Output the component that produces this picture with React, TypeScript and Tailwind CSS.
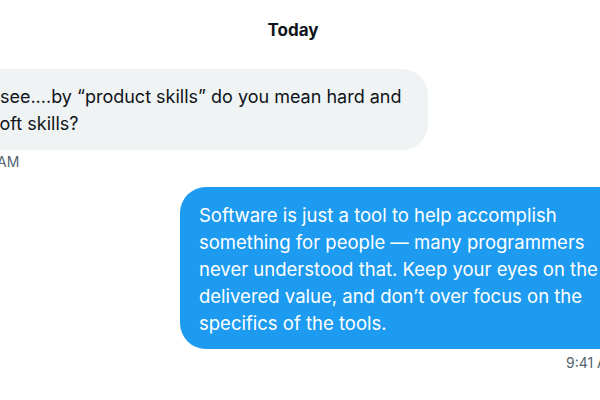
import React from "react";

const GREY_LINES = ["I see....by “product skills” do you mean hard and", "soft skills?"];

const BLUE_LINES = [
  "Software is just a tool to help accomplish",
  "something for people — many programmers",
  "never understood that. Keep your eyes on the",
  "delivered value, and don’t over focus on the",
  "specifics of the tools.",
];

export default function App() {
  return (
    <div className="h-[400px] w-[600px] overflow-hidden bg-white font-['Inter',Arial,sans-serif] text-[#0f1419]">
      <div className="pr-[14px] pt-[20px] text-center text-[17px] font-bold leading-[20px]">Today</div>

      {/* incoming message, cut off on the left */}
      <div className="mt-[29px] flex flex-col items-start">
        <div className="-ml-[30px] rounded-[26px] bg-[#eff3f4] pb-[13px] pl-[20px] pr-[26px] pt-[14px] text-[18px] leading-[27px]">
          {GREY_LINES.map((line) => (
            <div key={line} className="whitespace-nowrap">
              {line}
            </div>
          ))}
        </div>
        <div className="-ml-[34px] mt-[3px] whitespace-nowrap text-[14px] leading-[18px] text-[#536471]">9:41 AM</div>
      </div>

      {/* outgoing message, cut off on the right */}
      <div className="mt-[16px] flex flex-col items-start pl-[180px]">
        <div className="w-[460px] rounded-[26px] bg-[#1d9bf0] pb-[12px] pl-[19px] pt-[15px] text-[18.5px] leading-[27px] text-white">
          {BLUE_LINES.map((line) => (
            <div key={line} className="whitespace-nowrap">
              {line}
            </div>
          ))}
        </div>
        <div className="ml-[386px] mt-[5px] whitespace-nowrap text-[14px] leading-[18px] text-[#536471]">9:41 AM</div>
      </div>
    </div>
  );
}
